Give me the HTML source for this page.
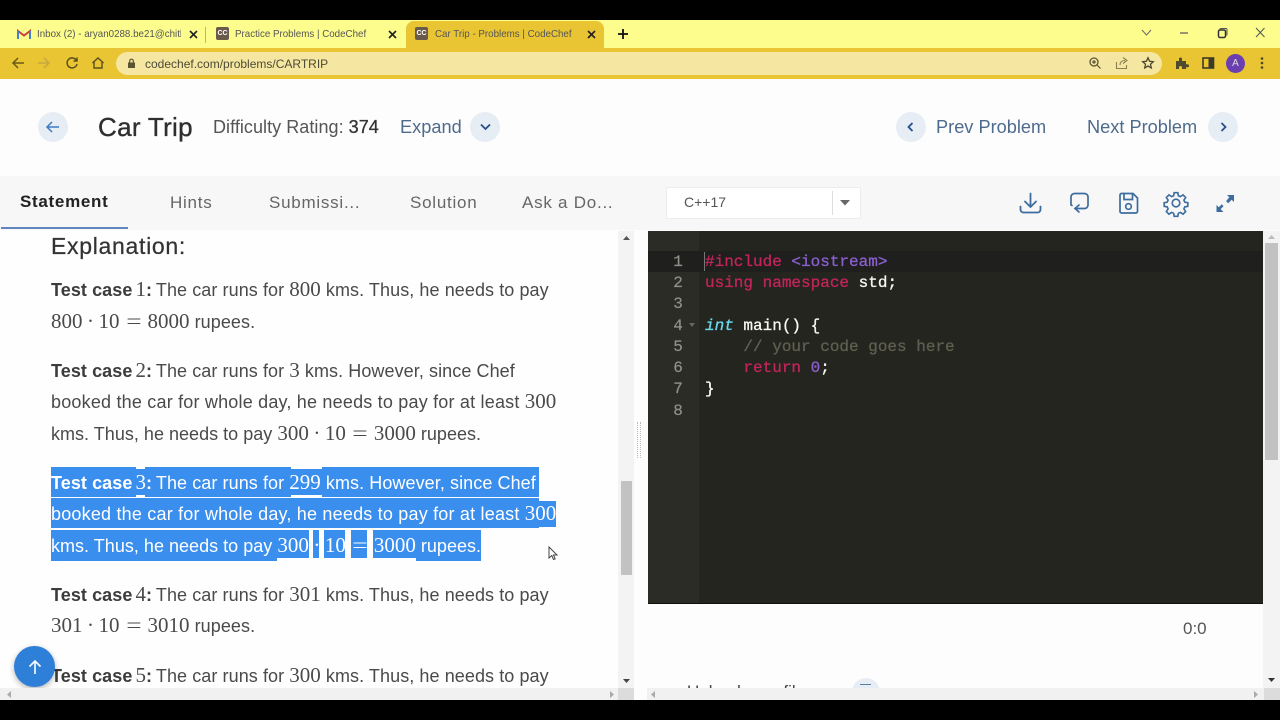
<!DOCTYPE html>
<html><head><meta charset="utf-8"><style>
html,body{margin:0;padding:0;background:#000}
body{width:1280px;height:720px;overflow:hidden;position:relative;font-family:"Liberation Sans",sans-serif}
.a{position:absolute}
.t{position:absolute;white-space:nowrap;font-size:18px;line-height:24px;color:#4a4a4a;left:51px;letter-spacing:.08px}
.t b{color:#3c3c3c}
.t b.k{margin-right:-1px}
.t i{font-family:"Liberation Serif",serif;font-style:normal;font-size:21px;letter-spacing:0}
.t i.q{margin-left:-2px}
.t u{display:inline-block;text-decoration:none;text-align:center}
.t u.d{width:16px}
.t u.e{width:28px;transform:scaleX(1.3)}
.s{color:#fff}.s b{color:#fff}
.hl{position:absolute;background:#3a8eee}
.w{position:absolute;background:#fefefe}
.c{position:absolute;left:705px;font:16px/21px "Liberation Mono",monospace;color:#f8f8f2;white-space:pre;-webkit-text-stroke:.3px}
.n{position:absolute;left:670px;width:16px;text-align:center;font:16px/21px "Liberation Mono",monospace;color:#8f908a;-webkit-text-stroke:.2px}
.r{color:#c2245c}.v{color:#8a5fd0}
.round{position:absolute;width:30px;height:30px;border-radius:50%;background:#e6edf4}
.bl{color:#4e6a8c;font-size:18.200px;position:absolute;white-space:nowrap;line-height:24px;top:115px}
.tab{position:absolute;color:#666;font-size:17px;line-height:22px;letter-spacing:.75px;white-space:nowrap;top:192px}
.ct{position:absolute;font-size:10.5px;line-height:14px;color:#555;white-space:nowrap;top:27px;transform:scaleX(.93);transform-origin:0 0}
svg{position:absolute;overflow:visible}
</style></head><body>

<!-- browser chrome -->
<div class="a" style="left:0;top:20px;width:1280px;height:28px;background:#fdfd8d"></div>
<div class="a" style="left:0;top:48px;width:1280px;height:31px;background:#e9c433"></div>
<div class="a" style="left:406px;top:21px;width:198px;height:28px;background:#e9c433;border-radius:8px 8px 0 0"></div>
<div class="a" style="left:205px;top:27px;width:1px;height:16px;background:#b9b86a"></div>
<div class="a" style="left:116px;top:52px;width:1046px;height:23px;border-radius:12px;background:#f5e7a2"></div>

<svg style="left:17px;top:29px" width="14" height="11" viewBox="0 0 14 11"><path d="M1 10V2l6 4.500L13 2v8" fill="none" stroke="#c9423a" stroke-width="2"/><path d="M1 10V2M13 10V2" stroke="#4a7fd0" stroke-width="2"/></svg>
<div class="a" style="left:0;top:20px;width:181px;height:28px;overflow:hidden"><div class="ct" style="left:37px;top:7px">Inbox (2) - aryan0288.be21@chitkara</div></div>
<div class="ct" style="left:235px">Practice Problems | CodeChef</div>
<div class="ct" style="left:435px">Car Trip - Problems | CodeChef</div>
<div class="a" style="left:216px;top:27px;width:13px;height:13px;background:#6a5a4c;border-radius:2px;color:#fff;font:bold 7px/13px 'Liberation Sans';text-align:center">CC</div>
<div class="a" style="left:415px;top:27px;width:13px;height:13px;background:#6a5a4c;border-radius:2px;color:#fff;font:bold 7px/13px 'Liberation Sans';text-align:center">CC</div>
<svg style="left:189px;top:30px" width="9" height="9"><path d="M1 1l7 7M8 1L1 8" stroke="#222" stroke-width="1.600"/></svg>
<svg style="left:388px;top:30px" width="9" height="9"><path d="M1 1l7 7M8 1L1 8" stroke="#222" stroke-width="1.600"/></svg>
<svg style="left:587px;top:30px" width="9" height="9"><path d="M1 1l7 7M8 1L1 8" stroke="#222" stroke-width="1.600"/></svg>
<svg style="left:617px;top:28px" width="12" height="12"><path d="M6 1v10M1 6h10" stroke="#111" stroke-width="1.800"/></svg>

<svg style="left:1141px;top:29px" width="11" height="8"><path d="M1 1l4.500 5L10 1" fill="none" stroke="#666" stroke-width="1"/></svg>
<svg style="left:1179px;top:32px" width="10" height="2"><path d="M1 1h8" stroke="#555" stroke-width="1.200"/></svg>
<svg style="left:1217px;top:27px" width="11" height="12"><path d="M3 3.500V2.500a1 1 0 0 1 1-1h5a1 1 0 0 1 1 1v6" fill="none" stroke="#555" stroke-width="1"/><rect x="1.500" y="3" width="7" height="7.500" rx="1.500" fill="none" stroke="#333" stroke-width="1.500"/></svg>
<svg style="left:1255px;top:27px" width="11" height="11" viewBox="0 0 11 11"><path d="M1 1l8.500 9M9.500 1L1 10" stroke="#555" stroke-width="1"/></svg>

<svg style="left:11px;top:56px" width="14" height="14"><path d="M13 7H2M7 2L2 7l5 5" fill="none" stroke="#6a5a1c" stroke-width="1.500"/></svg>
<svg style="left:37px;top:56px" width="14" height="14"><path d="M1 7h11M7 2l5 5-5 5" fill="none" stroke="#c3a83f" stroke-width="1.500"/></svg>
<svg style="left:65px;top:56px" width="14" height="14"><path d="M11.500 4.500A5 5 0 1 0 12 8M12 1.500v3.500H8.500" fill="none" stroke="#5a5020" stroke-width="1.500"/></svg>
<svg style="left:91px;top:56px" width="14" height="14"><path d="M1.500 7L7 2l5.500 5M3 6v6h8V6" fill="none" stroke="#5a5020" stroke-width="1.400"/></svg>
<svg style="left:127px;top:58px" width="9" height="11"><rect x="1" y="4.500" width="7" height="5.500" fill="#5a5430"/><path d="M2.700 5V3a1.800 1.800 0 0 1 3.600 0v2" fill="none" stroke="#5a5430" stroke-width="1.200"/></svg>
<div class="a" style="left:145px;top:56px;font-size:12px;line-height:16px;color:#4d4a35;white-space:nowrap">codechef.com/problems/CARTRIP</div>

<svg style="left:1088px;top:56px" width="14" height="14"><circle cx="6" cy="6" r="4" fill="none" stroke="#5a5535" stroke-width="1.300"/><path d="M9 9l3.500 3.500M4 6h4M6 4v4" stroke="#5a5535" stroke-width="1.200"/></svg>
<svg style="left:1115px;top:56px" width="14" height="14"><path d="M1.500 6v6.500h10V9M5 9c0-3 2-4.500 5-4.500M8 1.500l4 3-4 3" fill="none" stroke="#8a8050" stroke-width="1.100"/></svg>
<svg style="left:1141px;top:56px" width="14" height="14"><path d="M7 1.800l1.600 3.500 3.700.4-2.800 2.500.8 3.700L7 10l-3.300 1.900.8-3.700L1.700 5.700l3.700-.4z" fill="none" stroke="#4a4730" stroke-width="1.300"/></svg>
<svg style="left:1175px;top:56px" width="14" height="14"><path d="M1 5h3V3a1.500 1.500 0 0 1 3 0v2h4v3.200h1.500a1.500 1.500 0 0 1 0 3H11V13H7v-1.500a1.500 1.500 0 0 0-3 0V13H1z" fill="#4f4a2e"/></svg>
<svg style="left:1202px;top:57px" width="13" height="12"><rect x="1" y="1" width="10.500" height="10" fill="none" stroke="#3d3a26" stroke-width="1.600"/><rect x="6.500" y="1" width="5" height="10" fill="#3d3a26"/></svg>
<div class="a" style="left:1226px;top:54px;width:19px;height:19px;border-radius:50%;background:#6b3fb0;color:#ddd;font-size:10px;line-height:19px;text-align:center">A</div>
<svg style="left:1260px;top:56px" width="4" height="14"><circle cx="2" cy="2.500" r="1.300" fill="#4a4730"/><circle cx="2" cy="7" r="1.300" fill="#4a4730"/><circle cx="2" cy="11.500" r="1.300" fill="#4a4730"/></svg>

<!-- page -->
<div class="a" style="left:0;top:79px;width:1280px;height:621px;background:#fdfdfd"></div>
<div class="a" style="left:0;top:176px;width:1280px;height:54px;background:#f7f7f7"></div>

<div class="round" style="left:38px;top:112px"></div>
<svg style="left:45px;top:120px" width="15" height="14"><path d="M14 7H2M7 2L2 7l5 5" fill="none" stroke="#3f7ac4" stroke-width="1.500"/></svg>
<div class="a" style="left:98px;top:111px;font-size:26px;line-height:32px;color:#2f2f2f;white-space:nowrap;letter-spacing:.3px;-webkit-text-stroke:.35px">Car Trip</div>
<div class="a" style="left:213px;top:115px;font-size:18px;line-height:24px;color:#555;white-space:nowrap;letter-spacing:.05px">Difficulty Rating: <span style="color:#333;-webkit-text-stroke:.3px">374</span></div>
<div class="bl" style="left:400px">Expand</div>
<div class="round" style="left:470px;top:112px"></div>
<svg style="left:479px;top:123px" width="13" height="9"><path d="M2 1.500l4.500 4.500L11 1.500" fill="none" stroke="#24508a" stroke-width="1.800"/></svg>
<div class="round" style="left:896px;top:112px"></div>
<svg style="left:906px;top:121px" width="9" height="12"><path d="M6.500 2L2.500 6l4 4" fill="none" stroke="#24508a" stroke-width="1.800"/></svg>
<div class="bl" style="left:936px">Prev Problem</div>
<div class="bl" style="left:1087px">Next Problem</div>
<div class="round" style="left:1208px;top:112px"></div>
<svg style="left:1219px;top:121px" width="9" height="12"><path d="M2.500 2l4 4-4 4" fill="none" stroke="#24508a" stroke-width="1.800"/></svg>

<!-- tabs -->
<div class="tab" style="left:20px;top:191px;color:#222;font-weight:bold;letter-spacing:.7px">Statement</div>
<div class="a" style="left:1px;top:227px;width:127px;height:2px;background:#5f87bd"></div>
<div class="tab" style="left:170px">Hints</div>
<div class="tab" style="left:269px">Submissi...</div>
<div class="tab" style="left:410px">Solution</div>
<div class="tab" style="left:522px">Ask a Do...</div>

<div class="a" style="left:666px;top:187px;width:195px;height:32px;background:#fff;border:1px solid #ececec;border-radius:2px;box-sizing:border-box"></div>
<div class="a" style="left:684px;top:193px;font-size:14px;line-height:18px;color:#555">C++17</div>
<div class="a" style="left:832px;top:191px;width:1px;height:24px;background:#ddd"></div>
<svg style="left:840px;top:200px" width="10" height="6"><path d="M0 0h10L5 5.500z" fill="#666"/></svg>

<!-- editor toolbar icons -->
<svg style="left:1018px;top:191px" width="24" height="24" fill="none" stroke="#3d6c9e" stroke-width="1.800" stroke-linecap="round"><path d="M12.500 2.500v13M7 10.500l5.500 5.500 5.500-5.500M2.500 15.500v3a3 3 0 0 0 3 3h14a3 3 0 0 0 3-3v-3"/></svg>
<svg style="left:1069px;top:192px" width="21" height="21" fill="none" stroke="#3d6c9e" stroke-width="1.700" stroke-linecap="round"><path d="M3 13.500l-1-.5V5a3.500 3.500 0 0 1 3.500-3.500h10A3.500 3.500 0 0 1 19 5v8a3.500 3.500 0 0 1-3.500 3.500H6"/><path d="M10 13l-4 3.500 4 3.500"/></svg>
<svg style="left:1118px;top:192px" width="21" height="22" fill="none" stroke="#3d6c9e" stroke-width="1.700"><path d="M2 3a1.500 1.500 0 0 1 1.500-1.500H15L19.500 6v13.500a1.500 1.500 0 0 1-1.500 1.500H3.500A1.500 1.500 0 0 1 2 19.500z"/><path d="M6 1.500v6h8.500v-6"/><circle cx="10.500" cy="14.500" r="2.800"/></svg>
<svg style="left:1163px;top:190px" width="26" height="26" viewBox="0 0 24 24" fill="none" stroke="#3d6c9e" stroke-width="1.500"><circle cx="12" cy="12" r="3.500"/><path d="M10.300 2.500h3.400l.5 2.800 1.900.8 2.400-1.600 2.400 2.400-1.600 2.400.8 1.900 2.800.5v3.400l-2.800.5-.8 1.900 1.600 2.400-2.400 2.400-2.400-1.600-1.900.8-.5 2.800h-3.400l-.5-2.800-1.900-.8-2.400 1.600-2.400-2.400 1.600-2.400-.8-1.900-2.800-.5v-3.400l2.800-.5.8-1.900-1.600-2.400 2.400-2.400 2.400 1.600 1.900-.8z"/></svg>
<svg style="left:1214px;top:192px" width="22" height="22"><path d="M13 3h7v7l-2.300-2.300-3.500 3.500-2.100-2.100 3.200-3.800zM9.500 20h-7v-7l2.300 2.300 3-3 1.800 1.800-3 3z" fill="#3d6c9e"/></svg>

<!-- left panel -->
<div class="a" style="left:0;top:231px;width:618px;height:457px;background:#fefefe"></div>
<div class="a" style="left:618px;top:231px;width:16px;height:457px;background:#f3f3f3"></div>
<div class="a" style="left:621px;top:481px;width:11px;height:94px;background:#c2c2c2"></div>
<svg style="left:623px;top:236px" width="7" height="4"><path d="M0 4h7L3.500 0z" fill="#555"/></svg>
<svg style="left:623px;top:679px" width="7" height="4"><path d="M0 0h7L3.500 4z" fill="#444"/></svg>

<div class="a" style="left:51px;top:232px;font-size:23px;line-height:28px;color:#333;white-space:nowrap;letter-spacing:.7px;-webkit-text-stroke:.25px">Explanation:</div>

<div class="t" style="top:277px"><b>Test case </b><i class="q">1</i><b class="k">:</b> The car runs for <i>800</i> kms. Thus, he needs to pay</div>
<div class="t" style="top:309px"><i>800<u class="d">·</u>10<u class="e">=</u>8000</i> rupees.</div>
<div class="t" style="top:358px"><b>Test case </b><i class="q">2</i><b class="k">:</b> The car runs for <i>3</i> kms. However, since Chef</div>
<div class="t" style="top:389px;letter-spacing:.2px">booked the car for whole day, he needs to pay for at least <i>300</i></div>
<div class="t" style="top:421px;letter-spacing:.02px">kms. Thus, he needs to pay <i>300<u class="d">·</u>10<u class="e">=</u>3000</i> rupees.</div>

<div class="hl" style="left:51px;top:467px;width:488px;height:30px"></div>
<div class="hl" style="left:51px;top:498px;width:488px;height:30px"></div>
<div class="hl" style="left:524px;top:501px;width:32px;height:26px"></div>
<div class="hl" style="left:51px;top:530px;width:430px;height:31px"></div>
<div class="w" style="left:136px;top:467px;width:9px;height:2px"></div>
<div class="w" style="left:291px;top:467px;width:31px;height:2px"></div>
<div class="w" style="left:309px;top:530px;width:4px;height:31px"></div>
<div class="w" style="left:319px;top:530px;width:5px;height:31px"></div>
<div class="w" style="left:345px;top:530px;width:6px;height:31px"></div>
<div class="w" style="left:367px;top:530px;width:6px;height:31px"></div>
<div class="w" style="left:277px;top:558px;width:139px;height:3px"></div>
<div class="t s" style="top:470px"><b>Test case </b><i class="q">3</i><b class="k">:</b> The car runs for <i>299</i> kms. However, since Chef</div>
<div class="t s" style="top:501px;letter-spacing:.2px">booked the car for whole day, he needs to pay for at least <i>300</i></div>
<div class="t s" style="top:533px;letter-spacing:.02px">kms. Thus, he needs to pay <i>300<u class="d">·</u>10<u class="e">=</u>3000</i> rupees.</div>
<div class="a" style="left:136px;top:495px;width:9px;height:3px;background:#fff"></div>
<div class="a" style="left:291px;top:495px;width:31px;height:3px;background:#fff"></div>
<svg style="left:548px;top:546px" width="10" height="15"><path d="M1 1v11l2.800-2.500L5.500 13.500l1.700-.7-1.700-3.800H9z" fill="#fff" stroke="#444" stroke-width="1"/></svg>

<div class="t" style="top:582px"><b>Test case </b><i class="q">4</i><b class="k">:</b> The car runs for <i>301</i> kms. Thus, he needs to pay</div>
<div class="t" style="top:613px"><i>301<u class="d">·</u>10<u class="e">=</u>3010</i> rupees.</div>
<div class="t" style="top:663px"><b>Test case </b><i class="q">5</i><b class="k">:</b> The car runs for <i>300</i> kms. Thus, he needs to pay</div>

<div class="a" style="left:14px;top:646px;width:41px;height:41px;border-radius:50%;background:#2d7fd8;box-shadow:0 2px 6px rgba(0,0,0,.3)"></div>
<svg style="left:27px;top:659px" width="16" height="16"><path d="M8 15V2M2.500 7.500L8 2l5.500 5.500" fill="none" stroke="#fff" stroke-width="1.600"/></svg>

<!-- divider -->
<div class="a" style="left:637px;top:422px;width:2px;height:36px;border-left:1px dotted #bbb;border-right:1px dotted #bbb"></div>

<!-- editor -->
<div class="a" style="left:648px;top:231px;width:615px;height:373px;background:#24251f;border-bottom:1px solid #111;box-sizing:border-box"></div>
<div class="a" style="left:648px;top:231px;width:51px;height:372px;background:#2a2c25"></div>
<div class="a" style="left:648px;top:251px;width:615px;height:21px;background:#1f1f1d"></div>
<div class="a" style="left:704px;top:252px;width:1px;height:19px;background:#777"></div>
<div class="n" style="top:252px">1</div><div class="n" style="top:273px">2</div><div class="n" style="top:294px">3</div><div class="n" style="top:316px">4</div><div class="n" style="top:337px">5</div><div class="n" style="top:358px">6</div><div class="n" style="top:379px">7</div><div class="n" style="top:401px">8</div>
<svg style="left:689px;top:323px" width="7" height="5"><path d="M0 0h6L3 4z" fill="#666"/></svg>
<div class="c" style="top:252px"><span class="r">#include</span> <span class="v">&lt;iostream&gt;</span></div>
<div class="c" style="top:273px"><span class="r">using namespace</span> std;</div>
<div class="c" style="top:316px"><span style="color:#66d9ef;font-style:italic">int</span> main() {</div>
<div class="c" style="top:337px;color:#5f5f50">    // your code goes here</div>
<div class="c" style="top:358px">    <span class="r">return</span> <span class="v">0</span>;</div>
<div class="c" style="top:379px">}</div>

<!-- right scrollbar -->
<div class="a" style="left:1263px;top:231px;width:17px;height:457px;background:#f3f3f3"></div>
<div class="a" style="left:1265px;top:243px;width:13px;height:217px;background:#c2c2c2"></div>
<svg style="left:1268px;top:235px" width="7" height="4"><path d="M0 4h7L3.500 0z" fill="#bbb"/></svg>
<svg style="left:1268px;top:678px" width="7" height="4"><path d="M0 0h7L3.500 4z" fill="#333"/></svg>

<div class="a" style="left:1183px;top:618px;font-size:17px;line-height:21px;color:#555">0:0</div>
<div class="a" style="left:687px;top:681px;font-size:17px;line-height:22px;color:#444;white-space:nowrap">Upload your file</div>
<div class="a" style="left:852px;top:678px;width:28px;height:28px;border-radius:50%;background:#e6edf4"></div>
<div class="a" style="left:860px;top:684px;width:11px;height:1px;background:#5a7ca5"></div>

<!-- bottom scrollbars -->
<div class="a" style="left:0;top:688px;width:634px;height:12px;background:#f1f1f1"></div>
<div class="a" style="left:618px;top:688px;width:16px;height:12px;background:#dcdcdc"></div>
<svg style="left:7px;top:691px" width="4" height="7"><path d="M4 0v7L0 3.500z" fill="#aaa"/></svg>
<svg style="left:610px;top:691px" width="4" height="7"><path d="M0 0v7l4-3.500z" fill="#aaa"/></svg>
<div class="a" style="left:634px;top:688px;width:14px;height:12px;background:#fdfdfd"></div>
<div class="a" style="left:647px;top:688px;width:633px;height:12px;background:#f1f1f1"></div>
<div class="a" style="left:1264px;top:688px;width:16px;height:12px;background:#dcdcdc"></div>
<svg style="left:651px;top:691px" width="4" height="7"><path d="M4 0v7L0 3.500z" fill="#aaa"/></svg>
<svg style="left:1254px;top:691px" width="4" height="7"><path d="M0 0v7l4-3.500z" fill="#aaa"/></svg>
<div class="a" style="left:0;top:700px;width:1280px;height:20px;background:#000"></div>
</body></html>
